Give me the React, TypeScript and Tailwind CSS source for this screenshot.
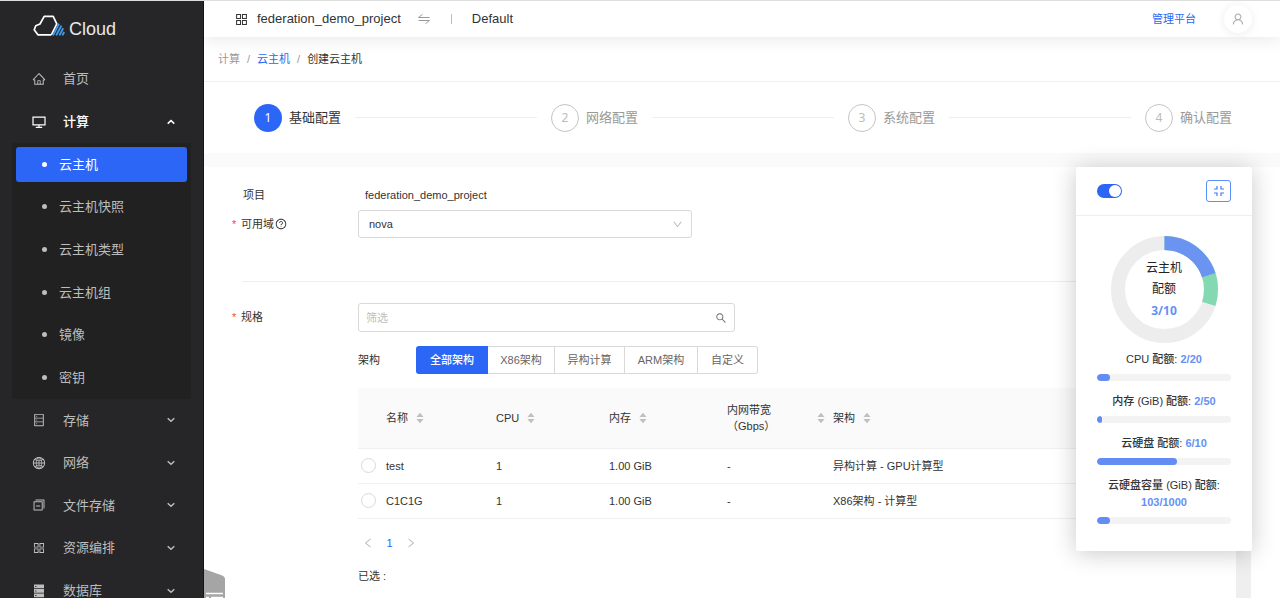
import React from 'react';
import {
  AiFillCaretDown,
  AiFillCaretUp,
  AiOutlineAppstore,
  AiOutlineDatabase,
  AiOutlineDown,
  AiOutlineGlobal,
  AiOutlineHome,
  AiOutlineLeft,
  AiOutlineQuestionCircle,
  AiOutlineRight,
  AiOutlineSearch,
  AiOutlineSwitcher,
  AiOutlineUser,
} from 'react-icons/ai';

function DesktopIcon() {
  return (
    <svg width="14" height="14" viewBox="0 0 14 14" fill="none" stroke="currentColor" strokeWidth="1.2" aria-hidden="true">
      <path d="M1 2.2h12v7.6H1zM7 9.8v2.4M3.8 12.4h6.4" />
    </svg>
  );
}

function ServerIcon() {
  return (
    <svg width="14" height="14" viewBox="0 0 14 14" aria-hidden="true">
      <path
        fill="currentColor"
        fillRule="evenodd"
        d="M2 .6h10v3.7H2zM2 5.1h10v3.7H2zM2 9.6h10v3.7H2zM3.2 2v.9h1.2V2zM3.2 6.5v.9h1.2v-.9zM3.2 11v.9h1.2V11z"
      />
    </svg>
  );
}

function Chevron({ up = false }: { up?: boolean }) {
  return (
    <svg width="8" height="6" viewBox="0 0 8 6" fill="none" stroke="currentColor" strokeWidth="1.5" aria-hidden="true">
      <path d={up ? 'M.7 4.6 4 1.6l3.3 3' : 'M.7 1.2 4 4.2l3.3-3'} />
    </svg>
  );
}

function Logo() {
  return (
    <a href="#home" className="flex h-14 shrink-0 items-center pb-[6px] pl-[33px] text-[#e8e8e8]">
      <svg width="32" height="22" viewBox="0 0 32 22" fill="none" aria-hidden="true">
        <path d="M18.4 19.8H4.9L1.2 14.8l1.6-4L7 9 11.2 1.4h9L23.8 8.8l-5.4 11" stroke="#fff" strokeWidth="1.7" strokeLinejoin="round" />
        <path d="m20 20.4 6-11.6M23.2 20.4l5.2-9.8M26.4 20.4l3.8-7.2M29.4 20.4l1.8-3.4" stroke="#3f9ae8" strokeWidth="1.9" />
      </svg>
      <span className="pl-1 pt-[6px] text-[18px] leading-6">Cloud</span>
    </a>
  );
}

const topItems = [
  { label: '首页', icon: <AiOutlineHome size={14} />, active: false },
  { label: '计算', icon: <DesktopIcon />, active: true },
];
const subItems = ['云主机', '云主机快照', '云主机类型', '云主机组', '镜像', '密钥'];
const bottomItems = [
  { label: '存储', icon: <AiOutlineDatabase size={14} /> },
  { label: '网络', icon: <AiOutlineGlobal size={14} /> },
  { label: '文件存储', icon: <AiOutlineSwitcher size={14} /> },
  { label: '资源编排', icon: <AiOutlineAppstore size={14} /> },
  { label: '数据库', icon: <ServerIcon /> },
];

function Sidebar() {
  return (
    <aside className="flex w-[204px] shrink-0 flex-col border-r border-[#141414] bg-[#262628] text-[13px] text-[#bdbdbd]">
      <Logo />
      <nav className="flex flex-col">
        {topItems.map((item) => (
          <a
            key={item.label}
            href="#menu"
            className={
              item.active
                ? 'flex h-[43px] items-center pl-8 pr-7 font-medium text-white'
                : 'flex h-[43px] items-center pl-8 pr-7'
            }
          >
            {item.icon}
            <span className="flex-1 pl-[17px]">{item.label}</span>
            {item.active && <Chevron up />}
          </a>
        ))}
        <div className="mx-3 grid h-64 grid-rows-6 bg-[#212121]">
          {subItems.map((label, i) => (
            <a
              key={label}
              href="#submenu"
              className={
                i === 0
                  ? 'm-1 flex items-center rounded-[3px] bg-[#2c66f6] pl-[26px] text-white'
                  : 'm-1 flex items-center rounded-[3px] pl-[26px]'
              }
            >
              <span className="size-[5px] rounded-full bg-current" />
              <span className="pl-3">{label}</span>
            </a>
          ))}
        </div>
        <div className="grid h-[213px] grid-rows-5">
          {bottomItems.map((item) => (
            <a key={item.label} href="#menu" className="flex items-center pl-8 pr-7">
              {item.icon}
              <span className="flex-1 pl-[17px]">{item.label}</span>
              <Chevron />
            </a>
          ))}
        </div>
      </nav>
    </aside>
  );
}

function Header() {
  return (
    <header className="relative z-10 flex h-9 shrink-0 items-center bg-white pl-[30px] pr-7 text-[13px] text-[#333] shadow-[0_4px_16px_rgba(0,0,0,0.08)]">
      <AiOutlineAppstore size={15} />
      <span className="pl-2">federation_demo_project</span>
      <button type="button" aria-label="切换项目" className="ml-4 text-[#9a9a9a]">
        <svg width="14" height="12" viewBox="0 0 14 12" fill="none" stroke="currentColor" aria-hidden="true">
          <path d="M12.5 4.5h-11l4-3.2M1.5 7.5h11l-4 3.2" />
        </svg>
      </button>
      <span className="ml-5 h-[10px] w-px bg-[#bbb]" />
      <span className="pl-5">Default</span>
      <a href="#admin" className="ml-auto text-[11px] text-[#2c66f6]">
        管理平台
      </a>
      <button
        type="button"
        aria-label="用户"
        className="ml-7 flex size-7 items-center justify-center rounded-full bg-white text-[#aaa] shadow-[0_1px_10px_rgba(0,0,0,0.08)]"
      >
        <AiOutlineUser size={14} />
      </button>
    </header>
  );
}

function Breadcrumb() {
  return (
    <nav className="flex h-[45px] shrink-0 items-center gap-[7px] border-b border-[#f0f0f0] pl-[14px] text-[11px] text-[#999]">
      <span>计算</span>
      <span>/</span>
      <a href="#instances" className="text-[#2c66f6]">
        云主机
      </a>
      <span>/</span>
      <span className="text-[#333]">创建云主机</span>
    </nav>
  );
}

const steps = ['基础配置', '网络配置', '系统配置', '确认配置'];

function Steps() {
  return (
    <ol className="flex h-[71px] shrink-0 items-center pl-[50px] pr-12 text-[13px]">
      {steps.map((label, i) => (
        <li key={label} className={i < 3 ? 'flex flex-1 items-center' : 'flex items-center'}>
          <span
            className={
              i === 0
                ? 'flex size-7 items-center justify-center rounded-full bg-[#2c66f6] font-["Noto_Sans"] text-[12px] text-white'
                : 'flex size-7 items-center justify-center rounded-full border border-[#c4c4c4] font-["Noto_Sans"] text-[12px] text-[#bbb]'
            }
          >
            {i + 1}
          </span>
          <span className={i === 0 ? 'pl-[7px] text-[#333]' : 'pl-[7px] text-[#999]'}>{label}</span>
          {i < 3 && <span className="mx-[14px] h-px flex-1 bg-[#eee]" />}
        </li>
      ))}
    </ol>
  );
}

function Required() {
  return <span className="w-[9px] text-[#f5483b]">*</span>;
}

function Sorter() {
  return (
    <span className="flex flex-col text-[#bfbfbf]">
      <AiFillCaretUp size={10} className="-mb-[2px]" />
      <AiFillCaretDown size={10} className="-mt-[2px]" />
    </span>
  );
}

const archTabs = [
  { label: '全部架构', cls: 'w-[72px]' },
  { label: 'X86架构', cls: 'w-[67px]' },
  { label: '异构计算', cls: 'w-[70px]' },
  { label: 'ARM架构', cls: 'w-[73px]' },
  { label: '自定义', cls: 'w-[60px]' },
];

const flavors = [
  { name: 'test', cpu: '1', memory: '1.00 GiB', bandwidth: '-', arch: '异构计算 - GPU计算型' },
  { name: 'C1C1G', cpu: '1', memory: '1.00 GiB', bandwidth: '-', arch: 'X86架构 - 计算型' },
];

function FlavorTable() {
  return (
    <table className="mt-[14px] w-full table-fixed text-left">
      <colgroup>
        <col className="w-7" />
        <col className="w-[110px]" />
        <col className="w-[113px]" />
        <col className="w-[118px]" />
        <col className="w-[106px]" />
        <col />
      </colgroup>
      <thead>
        <tr className="h-[60px] border-b border-[#f0f0f0] bg-[#fafafa]">
          <th aria-label="选择" />
          <th className="font-normal">
            <span className="flex items-center gap-[7px]">名称<Sorter /></span>
          </th>
          <th className="font-normal">
            <span className="flex items-center gap-[7px]">CPU<Sorter /></span>
          </th>
          <th className="font-normal">
            <span className="flex items-center gap-[7px]">内存<Sorter /></span>
          </th>
          <th className="pr-[7px] font-normal">
            <span className="flex items-center justify-between leading-4">
              <span>
                内网带宽
                <br />
                （Gbps）
              </span>
              <Sorter />
            </span>
          </th>
          <th className="font-normal">
            <span className="flex items-center gap-[7px]">架构<Sorter /></span>
          </th>
        </tr>
      </thead>
      <tbody>
        {flavors.map((f) => (
          <tr key={f.name} className="h-[35px] border-b border-[#f0f0f0]">
            <td className="pl-[3px]">
              <input
                type="radio"
                name="flavor"
                aria-label={f.name}
                className="block size-[15px] appearance-none rounded-full border border-[#d9d9d9] bg-white"
              />
            </td>
            <td>{f.name}</td>
            <td>{f.cpu}</td>
            <td>{f.memory}</td>
            <td>{f.bandwidth}</td>
            <td>{f.arch}</td>
          </tr>
        ))}
      </tbody>
    </table>
  );
}

function CreateForm() {
  return (
    <form className="min-w-0 flex-1 bg-white pl-7 pr-[14px] pt-5 text-[11px] leading-4 text-[#333]">
      <div className="flex">
        <span className="w-[126px] pl-[11px]">项目</span>
        <span className="pl-[7px]">federation_demo_project</span>
      </div>
      <div className="mt-[7px] flex items-center">
        <label htmlFor="zone" className="flex w-[126px] items-center">
          <Required />
          可用域
          <AiOutlineQuestionCircle size={12} className="ml-px" />
        </label>
        <div className="relative w-[334px]">
          <select
            id="zone"
            className="block h-7 w-full appearance-none rounded-[3px] border border-[#d9d9d9] bg-white px-[10px] outline-none"
          >
            <option>nova</option>
          </select>
          <AiOutlineDown size={11} className="pointer-events-none absolute right-[9px] top-[9px] text-[#b5b5b5]" />
        </div>
      </div>
      <hr className="ml-[10px] mt-[43px] border-[#eee]" />
      <div className="mt-[21px] flex">
        <label htmlFor="flavor-filter" className="flex h-7 w-[126px] shrink-0 items-center">
          <Required />
          规格
        </label>
        <div className="min-w-0 flex-1">
          <div className="relative w-[377px]">
            <input
              id="flavor-filter"
              type="text"
              placeholder="筛选"
              className="block h-[29px] w-full rounded-[3px] border border-[#d9d9d9] px-[7px] outline-none placeholder:text-[#bfbfbf]"
            />
            <AiOutlineSearch size={12} className="absolute right-2 top-[9px] text-[#666]" />
          </div>
          <div className="mt-[14px] flex items-center">
            <span className="w-[58px]">架构</span>
            <div className="flex">
              {archTabs.map((tab, i) => (
                <button
                  key={tab.label}
                  type="button"
                  className={
                    (i === 0
                      ? 'h-7 rounded-l-[3px] bg-[#2c66f6] font-medium text-white '
                      : i === archTabs.length - 1
                        ? 'h-7 rounded-r-[3px] border-y border-r border-[#d9d9d9] text-[#666] '
                        : 'h-7 border-y border-r border-[#d9d9d9] text-[#666] ') + tab.cls
                  }
                >
                  {tab.label}
                </button>
              ))}
            </div>
          </div>
          <FlavorTable />
          <div className="mt-4 flex items-center pl-1 text-[#bbb]">
            <button type="button" aria-label="上一页">
              <AiOutlineLeft size={12} />
            </button>
            <button type="button" className="w-[31px] text-[#2c66f6]">
              1
            </button>
            <button type="button" aria-label="下一页">
              <AiOutlineRight size={12} />
            </button>
          </div>
          <p className="mt-[17px]">已选 :</p>
        </div>
      </div>
    </form>
  );
}

const quotas = [
  { label: 'CPU 配额:', value: '2/20', percent: 10 },
  { label: '内存 (GiB) 配额:', value: '2/50', percent: 4 },
  { label: '云硬盘 配额:', value: '6/10', percent: 60 },
  { label: '云硬盘容量 (GiB) 配额:', value: '103/1000', percent: 10 },
];

function QuotaCard() {
  return (
    <section className="absolute right-7 top-[14px] w-44 rounded-[2px] bg-white pb-[27px] shadow-[0_2px_24px_rgba(0,0,0,0.22)]">
      <div className="flex h-[49px] items-center justify-between border-b border-[#eee] px-[21px]">
        <input
          type="checkbox"
          role="switch"
          aria-label="显示配额"
          defaultChecked
          className="h-[14px] w-[25px] appearance-none rounded-full bg-[#2c66f6] before:ml-3 before:mt-px before:block before:size-3 before:rounded-full before:bg-white"
        />
        <button
          type="button"
          aria-label="收起"
          className="flex h-[22px] w-[25px] items-center justify-center rounded-[3px] border border-[#5b8ff9] text-[#3f7bf8]"
        >
          <svg width="12" height="12" viewBox="0 0 12 12" fill="none" stroke="currentColor" strokeWidth="1.2" aria-hidden="true">
            <path d="M4 1v3H1M8 1v3h3M4 11V8H1M8 11V8h3" />
          </svg>
        </button>
      </div>
      <div className="mx-auto mt-5 grid size-[107px] place-items-center">
        <svg viewBox="0 0 107 107" className="col-start-1 row-start-1 size-full -rotate-90" fill="none" strokeWidth="14" aria-hidden="true">
          <circle cx="53.5" cy="53.5" r="46.5" stroke="#ededed" />
          <circle cx="53.5" cy="53.5" r="46.5" stroke="#84d8b2" pathLength="100" strokeDasharray="30 70" />
          <circle cx="53.5" cy="53.5" r="46.5" stroke="#6b93f2" pathLength="100" strokeDasharray="20 80" />
        </svg>
        <div className="col-start-1 row-start-1 text-center text-[12px] leading-[21px] text-[#222]">
          云主机
          <br />
          配额
          <br />
          <strong className='font-["Noto_Sans"] font-bold text-[#6690f4]'>3/10</strong>
        </div>
      </div>
      <ul className="mt-2 flex flex-col gap-3 px-[21px] text-[11px] font-medium leading-[17px] text-[#333]">
        {quotas.map((q) => (
          <li key={q.label} className="flex flex-col gap-[6px] text-center">
            <span>
              {q.label} <strong className="font-bold text-[#6690f4]">{q.value}</strong>
            </span>
            <span className="block h-[7px] overflow-hidden rounded-full bg-[#f3f3f3]">
              <span className="block h-full rounded-full bg-[#638df2]" style={{ width: `${q.percent}%` }} />
            </span>
          </li>
        ))}
      </ul>
    </section>
  );
}

export default function App() {
  return (
    <div className='relative flex h-screen flex-col overflow-hidden bg-white font-["Liberation_Sans","Noto_Sans_CJK_SC",sans-serif]'>
      <div className="h-px shrink-0 bg-[#dedede]" />
      <div className="flex min-h-0 flex-1">
        <Sidebar />
        <div className="relative flex min-w-0 flex-1 flex-col overflow-hidden">
          <Header />
          <Breadcrumb />
          <Steps />
          <main className="relative flex flex-1 flex-col">
            <div className="h-[14px] shrink-0 bg-[#fafafa]" />
            <div className="flex flex-1 pr-[29px]">
              <CreateForm />
              <div className="w-[15px] bg-[#efefef]" />
            </div>
            <QuotaCard />
          </main>
          <button type="button" aria-label="展开菜单" className="absolute bottom-0 left-0 z-10">
            <svg width="21" height="29" viewBox="0 0 21 29" className="block" aria-hidden="true">
              <path d="M0 0 17 6q4 1.6 4 4v19H0z" fill="#a5a5a5" />
              <path d="M2 24.5h17M2 28.5h3M7 28.5h12" stroke="#fff" strokeWidth="1.4" />
            </svg>
          </button>
        </div>
      </div>
    </div>
  );
}
